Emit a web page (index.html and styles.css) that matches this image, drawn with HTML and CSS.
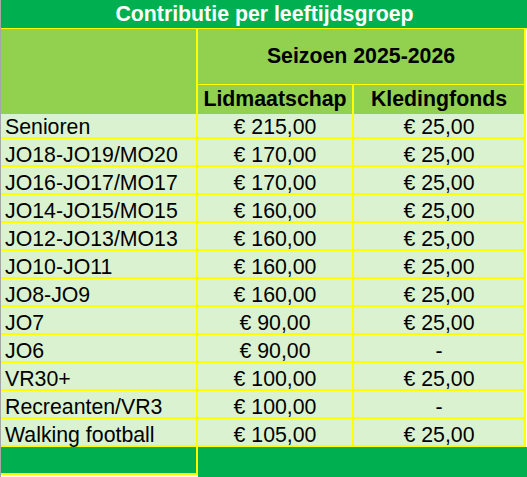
FILE: index.html
```html
<!DOCTYPE html>
<html lang="nl">
<head>
<meta charset="utf-8">
<title>Contributie per leeftijdsgroep</title>
<link rel="stylesheet" href="styles.css">
</head>
<body>
<div class="sheet">
  <div class="title">Contributie per leeftijdsgroep</div>

  <div class="hd-blank"></div>
  <div class="season">Seizoen 2025-2026</div>
  <div class="sub">Lidmaatschap</div>
  <div class="sub last">Kledingfonds</div>

  <div class="c name first">Senioren</div><div class="c val first">€ 215,00</div><div class="c val last first">€ 25,00</div>
  <div class="c name">JO18-JO19/MO20</div><div class="c val">€ 170,00</div><div class="c val last">€ 25,00</div>
  <div class="c name">JO16-JO17/MO17</div><div class="c val">€ 170,00</div><div class="c val last">€ 25,00</div>
  <div class="c name">JO14-JO15/MO15</div><div class="c val">€ 160,00</div><div class="c val last">€ 25,00</div>
  <div class="c name">JO12-JO13/MO13</div><div class="c val">€ 160,00</div><div class="c val last">€ 25,00</div>
  <div class="c name">JO10-JO11</div><div class="c val">€ 160,00</div><div class="c val last">€ 25,00</div>
  <div class="c name">JO8-JO9</div><div class="c val">€ 160,00</div><div class="c val last">€ 25,00</div>
  <div class="c name">JO7</div><div class="c val">€ 90,00</div><div class="c val last">€ 25,00</div>
  <div class="c name">JO6</div><div class="c val">€ 90,00</div><div class="c val last">-</div>
  <div class="c name">VR30+</div><div class="c val">€ 100,00</div><div class="c val last">€ 25,00</div>
  <div class="c name">Recreanten/VR3</div><div class="c val">€ 100,00</div><div class="c val last">-</div>
  <div class="c name">Walking football</div><div class="c val">€ 105,00</div><div class="c val last">€ 25,00</div>

  <div class="foot-left"></div>
  <div class="foot-right"></div>
</div>
</body>
</html>
```

FILE: styles.css
```css
html, body {
  margin: 0;
  padding: 0;
  background: #ffffff;
}

body {
  font-family: "Liberation Sans", Arial, sans-serif;
  color: #000000;
}

.sheet {
  width: 527px;
  height: 477px;
  box-sizing: border-box;
  border-left: 1px solid #a6a6a6;
  display: grid;
  grid-template-columns: 197px 156px 172px 1px;
  grid-template-rows: 29px 56px 29px 25px repeat(11, 28px) 30px;
  background: #ffffff;
}

.title {
  grid-column: 1 / -1;
  background: #00b050;
  color: #ffffff;
  font-weight: bold;
  font-size: 21.3px;
  line-height: 28px;
  text-align: center;
  border-bottom: 1px solid #ffff00;
  box-sizing: border-box;
  padding-left: 1px;
}

.hd-blank {
  grid-column: 1;
  grid-row: 2 / span 2;
  background: #92d050;
  border-right: 2px solid #ffff00;
}

.season {
  grid-column: 2 / span 2;
  grid-row: 2;
  background: #92d050;
  border-right: 2px solid #ffff00;
  border-bottom: 1px solid #ffff00;
  font-weight: bold;
  font-size: 21.3px;
  line-height: 55px;
  text-align: center;
}

.sub {
  grid-row: 3;
  background: #92d050;
  border-right: 2px solid #ffff00;
  font-weight: bold;
  font-size: 21.3px;
  line-height: 29px;
  text-align: center;
}

.sub.last {
  grid-column: 3;
}

.c {
  background: #daf2d0;
  border-right: 2px solid #ffff00;
  border-bottom: 2px solid #ffff00;
  font-size: 21.3px;
  line-height: 20px;
  padding-top: 6px;
  white-space: nowrap;
}

.c.first {
  padding-top: 3px;
}

.c.name {
  grid-column: 1;
  padding-left: 4px;
}

.c.val {
  text-align: center;
}

.c.val.last {
  grid-column: 3;
}

.foot-left {
  grid-column: 1;
  height: 28px;
  align-self: start;
  background: #00b050;
  border-right: 2px solid #ffff00;
  border-bottom: 2px solid #ffff00;
  box-sizing: border-box;
}

.foot-right {
  grid-column: 2 / span 3;
  background: #00b050;
}

.hd-blank, .season, .sub, .c {
  box-sizing: border-box;
}

.sheet > div:nth-child(n) {
  min-width: 0;
}
```
